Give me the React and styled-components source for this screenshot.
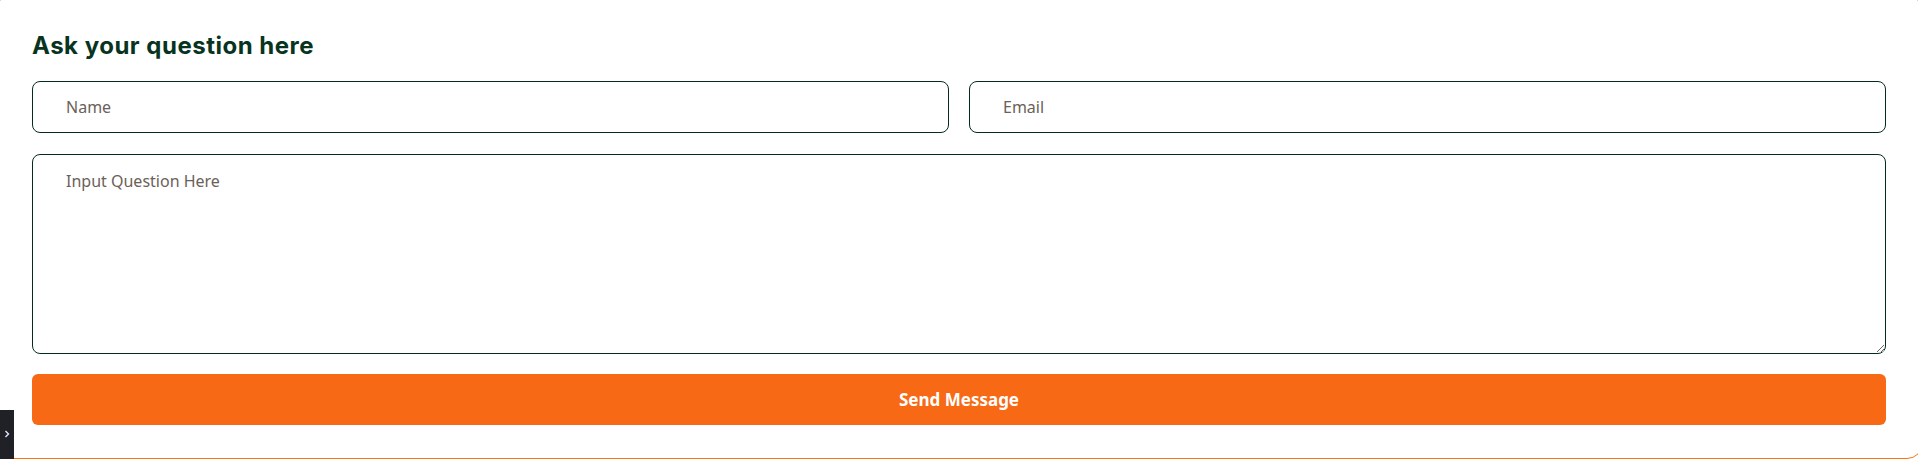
import styled, { createGlobalStyle } from "styled-components";

const GlobalStyle = createGlobalStyle`
  html, body {
    margin: 0;
    padding: 0;
    background: #ffffff;
    overflow: hidden;
  }
  * {
    box-sizing: border-box;
  }
`;

const Card = styled.form`
  margin: -5px -5px 0 -5px;
  height: 464px;
  border: 1px solid #f97316;
  border-radius: 16px;
  background: #ffffff;
  padding: 36px 36px 33px;
  display: flex;
  flex-direction: column;
`;

const Title = styled.h2`
  margin: 0 0 20px;
  font-family: Inter, "Liberation Sans", sans-serif;
  font-size: 24px;
  line-height: 1.2;
  font-weight: 700;
  letter-spacing: 0.5px;
  color: #08331f;
`;

const Fields = styled.div`
  display: grid;
  grid-template-columns: 1fr 1fr;
  gap: 21px 20px;
`;

const fieldStyle = `
  width: 100%;
  border: 1px solid #042c1a;
  border-radius: 8px;
  background: #ffffff;
  font-family: "Noto Sans", "Open Sans", sans-serif;
  font-size: 16px;
  color: #333;
  outline: none;
  &::placeholder {
    color: #6b6158;
    opacity: 1;
  }
`;

const Input = styled.input`
  ${fieldStyle}
  height: 52px;
  padding: 0 33px;
`;

const Question = styled.textarea`
  ${fieldStyle}
  grid-column: 1 / -1;
  height: 200px;
  padding: 14px 33px;
  line-height: 1.5;
  resize: vertical;
`;

const SendButton = styled.button`
  margin-top: 20px;
  height: 51px;
  width: 100%;
  border: none;
  border-radius: 6px;
  background: #f76914;
  color: #ffffff;
  font-family: "Noto Sans", "Open Sans", sans-serif;
  font-size: 17px;
  font-weight: 700;
  cursor: pointer;
`;

const SideTab = styled.div`
  position: fixed;
  left: 0;
  bottom: 0;
  width: 14px;
  height: 49px;
  background: #1f2126;
  display: flex;
  align-items: center;
  justify-content: center;
  padding-bottom: 2px;
`;

function Chevron() {
  return (
    <svg width="6" height="8" viewBox="0 0 6 8" fill="none">
      <path d="M1.5 1 L4.5 4 L1.5 7" stroke="#dfe6ff" strokeWidth="1.4" />
    </svg>
  );
}

export default function App() {
  return (
    <>
      <GlobalStyle />
      <Card onSubmit={(e) => e.preventDefault()}>
        <Title>Ask your question here</Title>
        <Fields>
          <Input type="text" placeholder="Name" />
          <Input type="email" placeholder="Email" />
          <Question placeholder="Input Question Here" />
        </Fields>
        <SendButton type="submit">Send Message</SendButton>
      </Card>
      <SideTab>
        <Chevron />
      </SideTab>
    </>
  );
}
